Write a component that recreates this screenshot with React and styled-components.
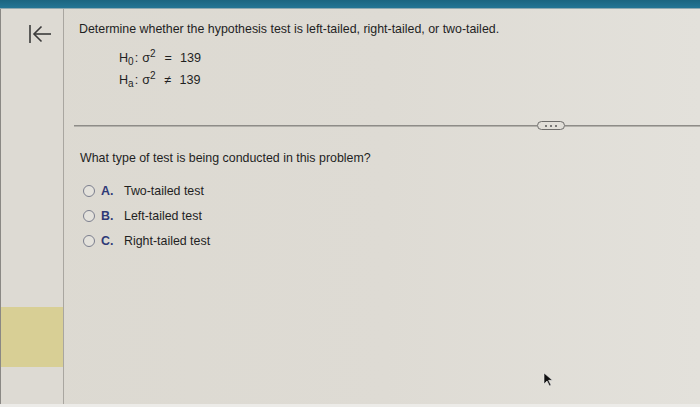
import React from "react";
import styled, { createGlobalStyle } from "styled-components";

const GlobalStyle = createGlobalStyle`
  html, body {
    margin: 0;
    padding: 0;
    background: #dedbd3;
  }
  body {
    font-family: "Liberation Sans", Arial, sans-serif;
    color: #1f1f1f;
  }
`;

const Screen = styled.div`
  width: 700px;
  height: 407px;
  position: relative;
  overflow: hidden;
  display: flex;
  flex-direction: column;
  background: linear-gradient(90deg, #dcd9d1 0%, #dedbd4 55%, #e3e1db 100%);
`;

const TopBar = styled.div`
  height: 8px;
  flex-shrink: 0;
  background: linear-gradient(180deg, #1b6580 0%, #237594 100%);
  border-bottom: 1px solid #8fa9b0;
`;

const Body = styled.div`
  flex: 1;
  display: flex;
  border-bottom: 3px solid #ecebe8;
`;

const Sidebar = styled.aside`
  width: 62px;
  flex-shrink: 0;
  border-left: 1px solid #8a8884;
  border-right: 1px solid #a9a6a0;
  background: #dddad3;
  display: flex;
  flex-direction: column;
`;

const BackButton = styled.button`
  all: unset;
  display: flex;
  justify-content: center;
  margin: 15px 0 0 16px;
  height: 20px;
  color: #3a3a3a;
`;

const Marker = styled.div`
  height: 60px;
  margin-top: 263px;
  background: #d8cf95;
`;

const Main = styled.main`
  flex: 1;
  padding: 12px 0 0 14px;
  font-size: 12.4px;
  line-height: 16px;
`;

const Prompt = styled.p`
  margin: 0;
  padding-left: 1px;
`;

const Hypotheses = styled.div`
  margin: 13px 0 0 41px;
  display: flex;
  flex-direction: column;
  gap: 6px;
`;

const Hyp = styled.div`
  font-size: 12.6px;
  line-height: 16px;
  white-space: nowrap;
`;

const Sub = styled.sub`
  font-size: 10px;
  vertical-align: -3px;
  line-height: 0;
`;

const Sup = styled.sup`
  font-size: 10px;
  vertical-align: 5px;
  line-height: 0;
`;

const Colon = styled.span`
  margin: 0 4px 0 1px;
`;

const Op = styled.span`
  display: inline-block;
  margin: 0 8px 0 9px;
`;

const Divider = styled.div`
  margin: 33px 0 0 -4px;
  display: flex;
  align-items: center;
`;

const Rule = styled.div`
  flex: ${(p) => p.$grow};
  height: 1px;
  background: #8e8c88;
  border-bottom: 1px solid #b3b1ab;
`;

const MoreButton = styled.button`
  all: unset;
  width: 26px;
  height: 7px;
  border: 1.5px solid #6d6c6a;
  border-radius: 5px;
  display: flex;
  align-items: center;
  justify-content: center;
  gap: 3px;
  span {
    width: 2px;
    height: 2px;
    border-radius: 50%;
    background: #555;
  }
`;

const Question = styled.p`
  margin: 20px 0 0 2px;
`;

const Options = styled.div`
  margin: 17px 0 0 5px;
  display: flex;
  flex-direction: column;
  gap: 9px;
`;

const Option = styled.label`
  display: flex;
  align-items: center;
  height: 16px;
`;

const Radio = styled.span`
  width: 10px;
  height: 10px;
  border: 1.5px solid #7c7f8e;
  border-radius: 50%;
  background: #e4e2dc;
  margin-right: 6px;
`;

const Letter = styled.span`
  width: 23px;
  font-weight: bold;
  color: #2f3977;
`;

const Cursor = styled.svg`
  position: absolute;
  left: 543px;
  top: 372px;
`;

const options = [
  { letter: "A.", text: "Two-tailed test" },
  { letter: "B.", text: "Left-tailed test" },
  { letter: "C.", text: "Right-tailed test" },
];

export default function App() {
  return (
    <>
      <GlobalStyle />
      <Screen>
        <TopBar />
        <Body>
          <Sidebar>
            <BackButton aria-label="Back">
              <svg width="24" height="20" viewBox="0 0 24 20" fill="none" stroke="currentColor" strokeWidth="1.6">
                <path d="M2 1v18" />
                <path d="M6 10h17" />
                <path d="M13.5 2.5 6 10l7.5 7.5" />
              </svg>
            </BackButton>
            <Marker />
          </Sidebar>
          <Main>
            <Prompt>
              Determine whether the hypothesis test is left-tailed, right-tailed, or two-tailed.
            </Prompt>
            <Hypotheses>
              <Hyp>
                H<Sub>0</Sub>
                <Colon>:</Colon>σ<Sup>2</Sup>
                <Op>=</Op>139
              </Hyp>
              <Hyp>
                H<Sub>a</Sub>
                <Colon>:</Colon>σ<Sup>2</Sup>
                <Op>≠</Op>139
              </Hyp>
            </Hypotheses>
            <Divider>
              <Rule $grow="462" />
              <MoreButton aria-label="More">
                <span />
                <span />
                <span />
              </MoreButton>
              <Rule $grow="135" />
            </Divider>
            <Question>What type of test is being conducted in this problem?</Question>
            <Options>
              {options.map((o) => (
                <Option key={o.letter}>
                  <Radio />
                  <Letter>{o.letter}</Letter>
                  {o.text}
                </Option>
              ))}
            </Options>
          </Main>
        </Body>
        <Cursor width="10" height="15" viewBox="0 0 10 15">
          <path d="M1 1v11l3-3 2.5 5 1.6-.8L5.6 8.3H9.5z" fill="#111" stroke="#eee" strokeWidth="0.6" />
        </Cursor>
      </Screen>
    </>
  );
}
